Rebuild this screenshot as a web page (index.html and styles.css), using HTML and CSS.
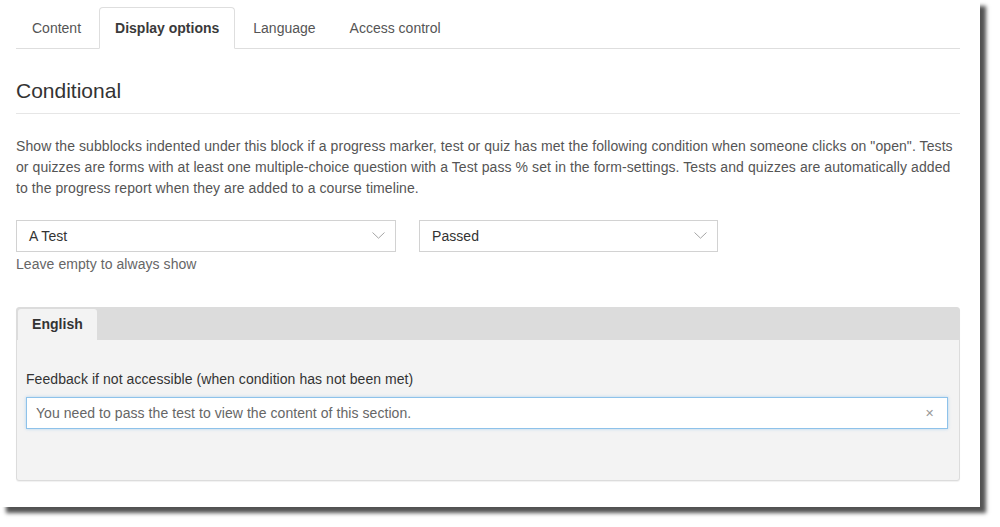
FILE: index.html
```html
<!DOCTYPE html>
<html lang="en">
<head>
<meta charset="utf-8">
<title>Display options</title>
<link rel="stylesheet" href="styles.css">
</head>
<body>
<div class="frame">
  <ul class="tabs">
    <li class="tab">Content</li>
    <li class="tab active">Display options</li>
    <li class="tab">Language</li>
    <li class="tab">Access control</li>
  </ul>

  <h2 class="section-title">Conditional</h2>

  <p class="intro">Show the subblocks indented under this block if a progress marker, test or quiz has met the following condition when someone clicks on "open". Tests or quizzes are forms with at least one multiple-choice question with a Test pass % set in the form-settings. Tests and quizzes are automatically added to the progress report when they are added to a course timeline.</p>

  <div class="select-row">
    <div class="select select-wide">
      <span>A Test</span>
      <svg class="chevron" width="13" height="7" viewBox="0 0 13 7"><path d="M0.5 0.5 L6.5 6.2 L12.5 0.5" fill="none" stroke="#a5a5a5" stroke-width="1"/></svg>
    </div>
    <div class="select select-narrow">
      <span>Passed</span>
      <svg class="chevron" width="13" height="7" viewBox="0 0 13 7"><path d="M0.5 0.5 L6.5 6.2 L12.5 0.5" fill="none" stroke="#a5a5a5" stroke-width="1"/></svg>
    </div>
  </div>
  <div class="help">Leave empty to always show</div>

  <div class="lang-panel">
    <div class="lang-head">
      <div class="lang-tab">English</div>
    </div>
    <div class="lang-body">
      <label class="field-label">Feedback if not accessible (when condition has not been met)</label>
      <div class="field">
        <input class="field-input" type="text" placeholder="You need to pass the test to view the content of this section.">
        <span class="clear">&#x2715;</span>
      </div>
    </div>
  </div>
</div>
</body>
</html>
```

FILE: styles.css
```css
* { box-sizing: border-box; }

html, body {
  margin: 0;
  padding: 0;
  background: #fff;
}

body {
  font-family: "Liberation Sans", Arial, sans-serif;
  font-size: 14px;
  letter-spacing: 0.06px;
  color: #333;
  padding-bottom: 20px;
}

.frame {
  width: 980px;
  height: 507px;
  background: #fff;
  padding: 7px 20px 0 16px;
  box-shadow: 6px 6px 4px rgba(0, 0, 0, 0.68);
}

.tabs {
  list-style: none;
  margin: 0;
  padding: 0;
  display: flex;
  border-bottom: 1px solid #dedede;
  letter-spacing: 0;
}

.tab {
  padding: 10px 15px;
  line-height: 20px;
  margin-right: 2px;
  margin-bottom: -1px;
  border: 1px solid transparent;
  border-radius: 4px 4px 0 0;
  color: #555;
}

.tab.active {
  border-color: #dedede #dedede transparent;
  background: #fff;
  color: #3a3a3a;
  font-weight: bold;
}

.section-title {
  margin: 30px 0 0;
  padding-bottom: 11px;
  border-bottom: 1px solid #e6e6e6;
  font-size: 21px;
  font-weight: normal;
  letter-spacing: 0;
  line-height: 23px;
  color: #333;
}

.intro {
  margin: 22px 0 0;
  line-height: 21px;
  letter-spacing: 0.08px;
  color: #555;
}

.select-row {
  display: flex;
  gap: 23px;
  margin-top: 21px;
}

.select {
  height: 32px;
  border: 1px solid #d2d2d2;
  background: #fff;
  display: flex;
  align-items: center;
  justify-content: space-between;
  padding: 0 10px 0 12px;
  color: #333;
}

.select-wide { width: 380px; }
.select-narrow { width: 299px; }

.chevron { display: block; margin-top: -2px; }

.help {
  margin-top: 2px;
  line-height: 20px;
  color: #666;
}

.lang-panel {
  margin-top: 33px;
  border: 1px solid #dcdcdc;
  border-radius: 3px;
  background: #f3f3f3;
  box-shadow: 0 1px 1px rgba(0, 0, 0, 0.06);
}

.lang-head {
  background: #dcdcdc;
  padding: 1px 0 0 1px;
  display: flex;
}

.lang-tab {
  background: #f3f3f3;
  height: 31px;
  line-height: 31px;
  padding: 0 14px;
  font-weight: bold;
  color: #333;
  border-radius: 3px 3px 0 0;
}

.lang-body {
  padding: 29px 11px 51px 9px;
}

.field-label {
  display: block;
  line-height: 20px;
  color: #333;
}

.field {
  margin-top: 8px;
  height: 32px;
  display: flex;
  align-items: center;
  background: #fff;
  border: 1px solid #8ec2ea;
  box-shadow: 0 0 3px rgba(102, 175, 233, 0.45);
  padding: 0 13px 0 9px;
}

.field-input {
  flex: 1;
  border: none;
  outline: none;
  padding: 0;
  font-family: "Liberation Sans", Arial, sans-serif;
  font-size: 14px;
  letter-spacing: 0.06px;
  background: transparent;
  color: #333;
}

.field-input::placeholder {
  color: #666;
}

.clear {
  font-size: 11px;
  color: #999;
}
```
